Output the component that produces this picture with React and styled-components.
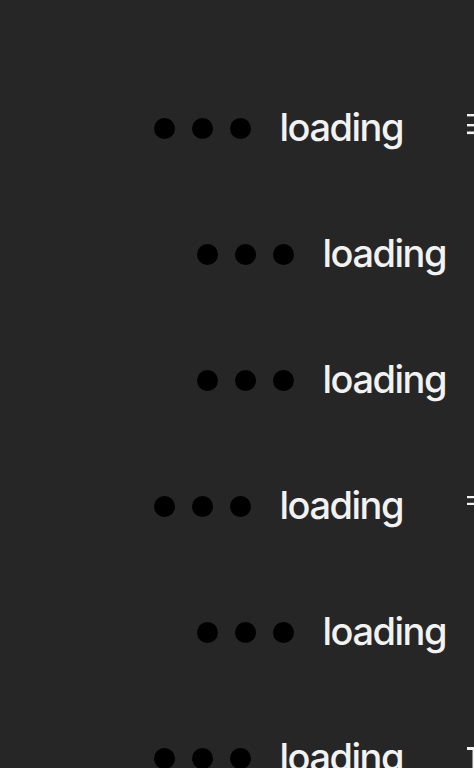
import React from "react";
import styled, { createGlobalStyle } from "styled-components";

const GlobalStyle = createGlobalStyle`
  html, body {
    margin: 0;
    padding: 0;
    background: #262626;
    overflow: hidden;
  }
  body {
    font-family: Inter, "Noto Sans", sans-serif;
  }
`;

const rows = [
  { id: 1, tail: "menu" },
  { id: 2 },
  { id: 3 },
  { id: 4, tail: "equal" },
  { id: 5 },
  { id: 6, tail: "tee" },
];

const Page = styled.div`
  width: 474px;
  height: 768px;
  overflow: hidden;
  background: #262626;
`;

const List = styled.ul`
  list-style: none;
  margin: 0;
  padding: 108px 28px 0 0;
  display: flex;
  flex-direction: column;
  gap: 86px;
`;

const Row = styled.li`
  height: 40px;
  display: flex;
  align-items: center;
  justify-content: flex-end;
`;

const Dots = styled.div`
  display: flex;
  align-items: center;
  gap: 17px;
`;

const Dot = styled.span`
  width: 21px;
  height: 21px;
  border-radius: 50%;
  background: #000;
`;

const Label = styled.span`
  margin-left: 29px;
  color: #f2f2f2;
  font-size: 38px;
  font-weight: 450;
  line-height: 40px;
  letter-spacing: -1.5px;
  position: relative;
  top: -1px;
`;

const Tail = styled.div`
  width: 0;
  height: 40px;
  margin-left: 64px;
  margin-right: -21px;
  overflow: visible;
  svg {
    display: block;
  }
`;

const TailGlyph = ({ kind }) => (
  <svg width="12" height="40" viewBox="0 0 12 40" fill="#f2f2f2">
    {kind === "menu" && (
      <>
        <rect x="0" y="6" width="12" height="2.4" />
        <rect x="0" y="16" width="12" height="2.4" />
        <rect x="0" y="23.5" width="12" height="2.6" />
      </>
    )}
    {kind === "equal" && (
      <>
        <rect x="0" y="10" width="12" height="2.2" />
        <rect x="0" y="16.8" width="12" height="2.2" />
      </>
    )}
    {kind === "tee" && (
      <>
        <rect x="0" y="9" width="12" height="3" />
        <rect x="5.5" y="9" width="3" height="31" />
      </>
    )}
  </svg>
);

const LoadingRow = ({ tail }) => (
  <Row>
    <Dots>
      <Dot />
      <Dot />
      <Dot />
    </Dots>
    <Label>loading</Label>
    {tail && (
      <Tail>
        <TailGlyph kind={tail} />
      </Tail>
    )}
  </Row>
);

export default function App() {
  return (
    <>
      <GlobalStyle />
      <Page>
        <List>
          {rows.map((r) => (
            <LoadingRow key={r.id} tail={r.tail} />
          ))}
        </List>
      </Page>
    </>
  );
}
